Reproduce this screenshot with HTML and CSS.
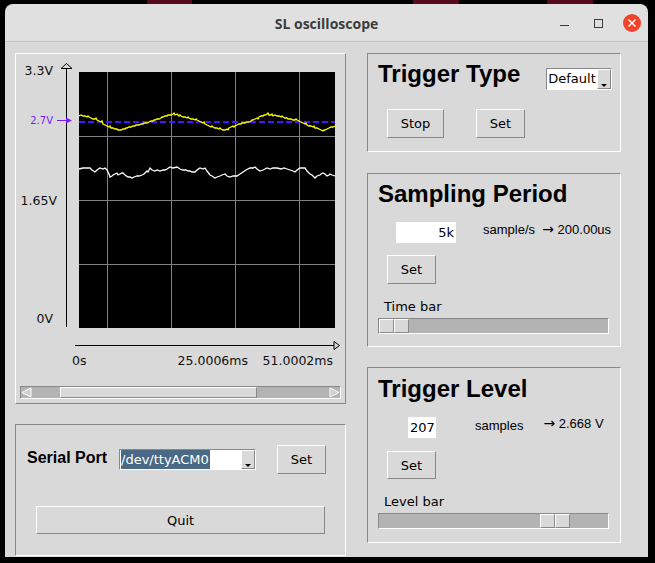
FILE: index.html
```html
<!DOCTYPE html>
<html lang="en">
  <head>
    <meta charset="UTF-8" />
    <title>SL oscilloscope</title>
    <link rel="stylesheet" href="styles.css">
  </head>
  <body>
    <div class="window">
      <div class="titlebar">
        <span></span>
        <span class="title">SL oscilloscope</span>
        <svg class="controls" width="86" height="37" viewBox="0 0 86 37">
          <line x1="2" y1="21.5" x2="11" y2="21.5" stroke="#3c3c3c" stroke-width="1" />
          <rect x="36.5" y="15.5" width="8" height="8" fill="none" stroke="#3c3c3c" stroke-width="1" />
          <circle cx="74" cy="19" r="9" fill="#f0432a" />
          <line x1="70.5" y1="15.5" x2="77.5" y2="22.5" stroke="#fff" stroke-width="1.5" />
          <line x1="77.5" y1="15.5" x2="70.5" y2="22.5" stroke="#fff" stroke-width="1.5" />
        </svg>
      </div>

      <div class="content">
        <!-- left column: scope + serial port -->
        <div class="left-col">
          <div class="frame raised plot-frame">
            <svg class="scope" width="329" height="326" viewBox="16 54 329 326">
              <!-- y axis -->
              <line x1="66.5" y1="68" x2="66.5" y2="327" stroke="#000" />
              <polygon points="66.5,63.5 61,68.5 72,68.5" fill="none" stroke="#000" />
              <text class="axis-label" x="53" y="75" text-anchor="end">3.3V</text>
              <text class="axis-label" x="57" y="205" text-anchor="end">1.65V</text>
              <text class="axis-label" x="53" y="323" text-anchor="end">0V</text>
              <text class="trig-label" x="53" y="124" text-anchor="end">2.7V</text>
              <line x1="57" y1="120.5" x2="68" y2="120.5" stroke="#7a1cff" />
              <polygon points="72,120.5 66,117.5 66,123.5" fill="#7a1cff" />

              <!-- plot -->
              <rect x="79" y="72" width="256" height="256" fill="#000" />
              <g stroke="#808080" stroke-width="1" shape-rendering="crispEdges">
                <line x1="107.5" y1="72" x2="107.5" y2="328" />
                <line x1="171.5" y1="72" x2="171.5" y2="328" />
                <line x1="235.5" y1="72" x2="235.5" y2="328" />
                <line x1="299.5" y1="72" x2="299.5" y2="328" />
                <line x1="79" y1="136.5" x2="335" y2="136.5" />
                <line x1="79" y1="200.5" x2="335" y2="200.5" />
                <line x1="79" y1="264.5" x2="335" y2="264.5" />
              </g>
              <line x1="79" y1="122" x2="335" y2="122" stroke="#4a14ff" stroke-width="2" stroke-dasharray="6 3" />
              <g transform="translate(79 72)" fill="none" stroke-width="1.3" stroke-linejoin="miter">
                <polyline stroke="#ffff00" points="0,44 2,43 4,44 6,44 8,45 9,44 10,45 12,46 14,47 16,47 17,46 18,48 20,49 22,50 23,49 24,52 26,53 28,54 30,55 31,54 32,56 34,56 36,57 38,57 39,58 40,58 42,58 44,57 46,57 47,56 48,56 50,55 52,55 54,54 56,54 57,53 58,53 60,53 62,52 64,52 65,51 66,51 68,51 70,50 72,49 74,49 75,48 76,48 78,47 80,47 82,46 83,45 84,45 86,44 88,44 89,43 90,43 92,43 94,42 95,41 96,43 98,42 100,44 101,43 102,44 104,45 106,45 108,46 109,45 110,46 112,47 114,47 116,48 117,47 118,48 120,49 122,50 124,51 125,50 126,52 128,53 130,54 132,55 133,54 134,55 136,56 138,56 140,57 141,56 142,57 144,58 146,58 148,57 149,58 150,56 152,55 154,54 155,55 156,54 158,53 160,52 162,52 163,51 164,51 166,51 168,50 170,50 172,49 173,48 174,48 176,47 178,46 179,47 180,45 182,44 184,44 185,43 186,43 188,42 189,41 190,43 192,43 193,42 194,44 196,43 198,44 200,44 202,45 203,44 204,45 206,46 208,46 209,47 210,47 212,47 214,48 216,48 217,47 218,48 220,49 222,50 224,51 226,52 227,51 228,53 230,54 232,54 234,55 235,54 236,56 238,56 240,57 242,58 244,59 245,58 246,58 248,57 250,56 252,55 254,55 256,54" />
                <polyline stroke="#ffffff" points="0,97 4,96 8,96 11,96 13,98 16,100 18,98 21,96 24,97 26,96 28,98 30,102 31,105 33,104 34,103 36,102 38,101 39,103 41,102 43,101 44,101 46,103 49,105 51,105 53,106 55,105 58,104 60,104 63,103 65,102 68,99 69,100 71,96 73,98 76,99 78,98 81,99 84,98 86,98 88,97 91,95 94,96 98,95 101,97 104,98 107,98 109,99 111,99 113,100 116,100 118,98 121,96 124,97 126,96 128,99 131,103 133,104 136,106 138,105 141,104 143,103 146,102 148,104 151,105 154,104 156,104 158,104 161,102 164,100 167,98 171,96 174,96 176,95 178,97 181,99 184,98 186,97 188,96 191,97 194,96 198,96 202,97 205,96 208,97 211,98 214,99 216,100 218,98 221,96 224,96 226,96 228,99 231,102 233,103 236,106 238,104 241,103 242,102 244,101 246,102 248,104 250,103 251,102 253,103 256,104" />
              </g>

              <!-- x axis -->
              <line x1="75" y1="345.5" x2="334" y2="345.5" stroke="#000" />
              <polygon points="339.5,345.5 334,341.5 334,349.5" fill="none" stroke="#000" />
              <text class="axis-label" x="72" y="365">0s</text>
              <text class="axis-label" x="248" y="365" text-anchor="end">25.0006ms</text>
              <text class="axis-label" x="333" y="365" text-anchor="end">51.0002ms</text>
            </svg>

            <div class="hscroll">
              <span class="sb-arrow">
                <svg width="11" height="11" viewBox="0 0 11 11">
                  <polygon points="1,5.5 10,1 10,10" fill="#cfcfcf" stroke="#fff" />
                </svg>
              </span>
              <div class="sb-trough"><div class="sb-thumb"></div></div>
              <span class="sb-arrow">
                <svg width="11" height="11" viewBox="0 0 11 11">
                  <polygon points="10,5.5 1,1 1,10" fill="#cfcfcf" stroke="#fff" />
                </svg>
              </span>
            </div>
          </div>

          <div class="frame sunken serial-frame">
            <div class="serial-row">
              <span class="serial-label">Serial Port</span>
              <div class="combo">
                <span class="combo-text"><span class="selected">/dev/ttyACM0</span></span>
                <span class="drop-btn">
                  <svg width="12" height="19" viewBox="0 0 12 19">
                    <polygon points="3,13 9,13 6,16" fill="#000" />
                  </svg>
                </span>
              </div>
              <button class="btn btn-set serial-set">Set</button>
            </div>
            <button class="btn btn-quit">Quit</button>
          </div>
        </div>

        <!-- right column: trigger / sampling -->
        <div class="right-col">
          <div class="frame sunken tt-frame">
            <div class="tt-head">
              <h2 class="frame-title">Trigger Type</h2>
              <div class="optmenu">
                <span class="opt-text">Default</span>
                <span class="drop-btn">
                  <svg width="12" height="20" viewBox="0 0 12 20">
                    <polygon points="3,14 9,14 6,17" fill="#000" />
                  </svg>
                </span>
              </div>
            </div>
            <div class="tt-buttons">
              <button class="btn btn-stop">Stop</button>
              <button class="btn btn-set">Set</button>
            </div>
          </div>

          <div class="frame sunken sp-frame">
            <h2 class="frame-title">Sampling Period</h2>
            <div class="entry-row">
              <span class="entry entry-rate">5k</span>
              <span class="info rate-info">sample/s&nbsp;&nbsp;<span class="arrow">→</span> 200.00us</span>
            </div>
            <button class="btn btn-set set-row">Set</button>
            <div class="bar-label">Time bar</div>
            <div class="scale">
              <div class="slider" style="margin-left: 0px"><span></span><span></span></div>
            </div>
          </div>

          <div class="frame sunken tl-frame">
            <h2 class="frame-title">Trigger Level</h2>
            <div class="entry-row">
              <span class="entry entry-level">207</span>
              <span class="info samples-info">samples</span>
              <span class="info volt-info"><span class="arrow">→</span> 2.668 V</span>
            </div>
            <button class="btn btn-set set-row set-level">Set</button>
            <div class="bar-label">Level bar</div>
            <div class="scale">
              <div class="slider" style="margin-left: 161px"><span></span><span></span></div>
            </div>
          </div>
        </div>
      </div>
    </div>
  </body>
</html>
```

FILE: styles.css
```css
/* Base */
* {
  box-sizing: border-box;
  margin: 0;
  padding: 0;
}

body {
  width: 655px;
  height: 563px;
  overflow: hidden;
  font-family: "DejaVu Sans", sans-serif;
  font-size: 13px;
  color: #000;
  background:
    linear-gradient(#560b1c, #560b1c) 147px 0 / 45px 4px no-repeat,
    linear-gradient(#560b1c, #560b1c) 413px 0 / 46px 4px no-repeat,
    linear-gradient(#560b1c, #560b1c) 547px 0 / 46px 4px no-repeat,
    #000;
}

/* Window */
.window {
  margin: 4px 0 0 5px;
  width: 643px;
  height: 553px;
}

.titlebar {
  height: 38px;
  background-color: #e0e0e0;
  border-bottom: 1px solid #c2c2c2;
  border-radius: 8px 8px 0 0;
  display: grid;
  grid-template-columns: 1fr auto 1fr;
  align-items: center;
}

.title {
  font-family: "Open Sans", sans-serif;
  font-weight: 700;
  font-size: 14px;
  color: #3c3c3c;
  padding-top: 1px;
}

.controls {
  justify-self: end;
  margin-right: 4px;
}

.content {
  height: 515px;
  overflow: hidden;
  background-color: #d9d9d9;
  display: flex;
  gap: 21px;
  padding: 11px 0 0 10px;
}

/* Frames */
.frame {
  border: 1px solid;
}

.raised {
  border-color: #fff #888 #888 #fff;
}

.sunken {
  border-color: #888 #fff #fff #888;
}

.left-col {
  width: 331px;
  display: flex;
  flex-direction: column;
}

.right-col {
  width: 254px;
  display: flex;
  flex-direction: column;
}

/* Scope */
.plot-frame {
  height: 351px;
}

.scope {
  display: block;
}

.axis-label {
  font-family: "DejaVu Sans", sans-serif;
  font-size: 12.5px;
  fill: #111;
}

.trig-label {
  font-family: "DejaVu Sans", sans-serif;
  font-size: 10px;
  fill: #7a1cff;
}

.hscroll {
  margin: 6px 0 0 4px;
  width: 321px;
  height: 13px;
  display: flex;
  border: 1px solid;
  border-color: #888 #fff #fff #888;
  background-color: #b3b3b3;
}

.sb-arrow {
  width: 11px;
  height: 11px;
  display: flex;
}

.sb-trough {
  flex: 1;
  display: flex;
}

.sb-thumb {
  margin-left: 28px;
  width: 197px;
  background-color: #d9d9d9;
  border: 1px solid;
  border-color: #fff #888 #888 #fff;
}

/* Serial port */
.serial-frame {
  margin-top: 20px;
  height: 132px;
  padding: 20px 0 0 11px;
}

.serial-row {
  display: flex;
  align-items: center;
  height: 28px;
}

.serial-label {
  font-family: "Liberation Sans", Arial, sans-serif;
  font-weight: 700;
  font-size: 16px;
  margin-top: -2px;
}

.combo {
  margin-left: 12px;
  width: 137px;
  height: 21px;
  display: flex;
  border: 1px solid;
  border-color: #888 #fff #fff #888;
  background-color: #fff;
}

.combo-text {
  flex: 1;
  padding-left: 1px;
  line-height: 19px;
}

.selected {
  display: inline-block;
  background-color: #4a6984;
  color: #fff;
  line-height: 19px;
  padding-right: 1px;
}

.drop-btn {
  width: 14px;
  display: flex;
  justify-content: center;
  background-color: #d9d9d9;
  border: 1px solid;
  border-color: #fff #888 #888 #fff;
}

.serial-set {
  margin-left: 21px;
  height: 28px;
}

/* Buttons */
.btn {
  font-family: "DejaVu Sans", sans-serif;
  font-size: 13px;
  color: #000;
  height: 29px;
  background-color: #d9d9d9;
  border: 1px solid;
  border-color: #fff #888 #888 #fff;
  display: block;
}

.btn-set {
  width: 49px;
}

.btn-stop {
  width: 57px;
}

.btn-quit {
  margin: 33px 0 0 9px;
  width: 289px;
  height: 28px;
}

/* Right panels */
.frame-title {
  font-family: "Liberation Sans", Arial, sans-serif;
  font-weight: 700;
  font-size: 24px;
  line-height: 28px;
  color: #000;
}

.tt-frame {
  height: 99px;
  padding: 6px 0 0 10px;
}

.tt-head {
  display: flex;
  align-items: flex-start;
}

.optmenu {
  margin: 8px 0 0 26px;
  width: 66px;
  height: 22px;
  display: flex;
  border: 1px solid;
  border-color: #888 #fff #fff #888;
  background-color: #fff;
}

.opt-text {
  flex: 1;
  padding-left: 1px;
  line-height: 20px;
}

.tt-buttons {
  margin: 19px 0 0 9px;
  display: flex;
  gap: 32px;
}

.sp-frame {
  margin-top: 21px;
  height: 174px;
  padding: 6px 0 0 10px;
}

.tl-frame {
  margin-top: 20px;
  height: 176px;
  padding: 7px 0 0 10px;
}

.entry-row {
  margin-top: 14px;
  display: flex;
  align-items: flex-start;
}

.entry {
  height: 21px;
  line-height: 21px;
  background-color: #fff;
}

.entry-rate {
  margin-left: 18px;
  width: 60px;
  text-align: right;
  padding-right: 2px;
}

.entry-level {
  margin-left: 30px;
  width: 28px;
  padding-left: 2px;
}

.info {
  font-family: "Liberation Sans", Arial, sans-serif;
  font-size: 13px;
  line-height: 14px;
}

.arrow {
  font-family: "DejaVu Sans", sans-serif;
  font-size: 14px;
  line-height: 14px;
}

.rate-info {
  margin-left: 27px;
}

.samples-info {
  margin: 2px 0 0 39px;
}

.volt-info {
  margin: -1px 0 0 20px;
}

.set-row {
  margin: 12px 0 0 9px;
}

.set-level {
  margin-top: 13px;
  height: 28px;
}

.bar-label {
  margin: 15px 0 0 6px;
  line-height: 16px;
}

.scale {
  margin-top: 3px;
  width: 231px;
  height: 16px;
  border: 1px solid;
  border-color: #888 #fff #fff #888;
  background-color: #b3b3b3;
  display: flex;
}

.slider {
  display: flex;
}

.slider span {
  width: 15px;
  height: 14px;
  background-color: #d9d9d9;
  border: 1px solid;
  border-color: #fff #888 #888 #fff;
}
```
